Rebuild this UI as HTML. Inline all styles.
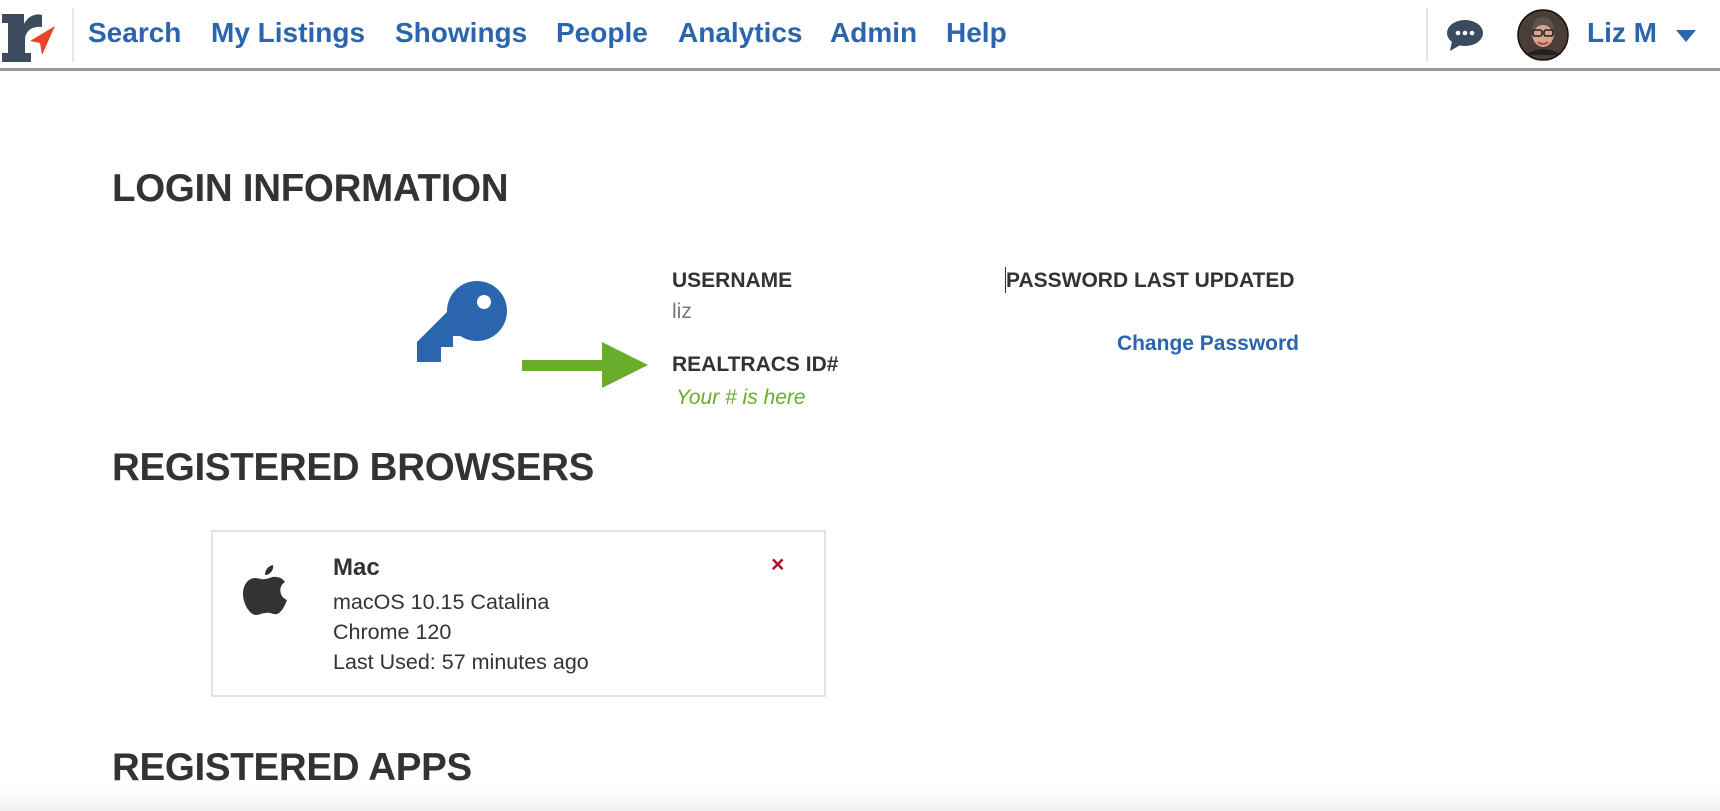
<!DOCTYPE html>
<html><head><meta charset="utf-8"><style>
*{margin:0;padding:0;box-sizing:border-box}
body{width:1720px;height:811px;overflow:hidden;background:#fff;font-family:"Liberation Sans",Arial,sans-serif;color:#333;position:relative}
.a{position:absolute;white-space:nowrap}
.nav{font-weight:bold;font-size:28px;color:#2a65ad;top:17px}
h1{position:absolute;font-size:38.5px;font-weight:bold;color:#333;left:112px;letter-spacing:-0.3px}
.lbl{font-weight:bold;font-size:21px;color:#333}
.grad{position:absolute;left:0;right:0;bottom:0;height:24px;background:linear-gradient(#fff,#f1f1f1)}
</style></head><body>
<svg class="a" style="left:0;top:6px" width="60" height="58" viewBox="0 0 60 58">
<path d="M2 8h22v10c4-8 12-11 18-9v12c-8-1-16 2-17 12v14h6v9H2v-9h6V17H2z" fill="#3d4b5e"/>
<path d="M55 20L30 35l10 2 2 12z" fill="#e8442a"/>
</svg>
<div class="a" style="left:72px;top:8px;width:2px;height:54px;background:#e6e6e6"></div>
<div class="a nav" style="left:88px">Search</div>
<div class="a nav" style="left:211px">My Listings</div>
<div class="a nav" style="left:395px">Showings</div>
<div class="a nav" style="left:556px">People</div>
<div class="a nav" style="left:678px">Analytics</div>
<div class="a nav" style="left:830px">Admin</div>
<div class="a nav" style="left:946px">Help</div>
<div class="a" style="left:1426px;top:8px;width:2px;height:54px;background:#e6e6e6"></div>
<svg class="a" style="left:1446px;top:19px" width="38" height="32" viewBox="0 0 38 32">
<ellipse cx="19" cy="14" rx="18" ry="13" fill="#3a4a5f"/><path d="M6 22L4 32 16 25z" fill="#3a4a5f"/>
<circle cx="12" cy="14" r="2.3" fill="#fff"/><circle cx="19" cy="14" r="2.3" fill="#fff"/><circle cx="26" cy="14" r="2.3" fill="#fff"/>
</svg>
<svg class="a" style="left:1517px;top:9px" width="52" height="52" viewBox="0 0 52 52">
<circle cx="26" cy="26" r="25" fill="#4a3e36" stroke="#111" stroke-width="1.5"/>
<ellipse cx="26" cy="24" rx="11" ry="14" fill="#d8a58c"/>
<path d="M14 30q0-22 12-22t12 22q-3-14-12-14t-12 14z" fill="#5c544c"/>
<rect x="16" y="21" width="9" height="6" rx="2" fill="none" stroke="#222" stroke-width="1.6"/><rect x="27" y="21" width="9" height="6" rx="2" fill="none" stroke="#222" stroke-width="1.6"/>
<path d="M21 33q5 4 10 0" stroke="#b0405a" stroke-width="2" fill="none"/>
<path d="M8 46q18-12 36 0" fill="#222"/>
</svg>
<div class="a nav" style="left:1587px">Liz M</div>
<svg class="a" style="left:1676px;top:30px" width="20" height="12"><path d="M0 0h20L10 12z" fill="#2a65ad"/></svg>
<div class="a" style="left:0;top:68px;width:1720px;height:3px;background:#999"></div>

<h1 style="top:167px">LOGIN INFORMATION</h1>
<svg class="a" style="left:417px;top:280px" width="92" height="92" viewBox="0 0 92 92">
<circle cx="60" cy="31" r="30" fill="#2a65ad"/>
<path d="M0 62L36 26 66 56 36 56 36 67 24 67 24 82 0 82z" fill="#2a65ad"/>
<circle cx="67" cy="22" r="7" fill="#fff"/>
</svg>
<svg class="a" style="left:522px;top:342px" width="128" height="46"><rect x="0" y="18" width="82" height="11" fill="#69ad2a"/><path d="M80 0L126 23 80 46z" fill="#69ad2a"/></svg>
<div class="a lbl" style="left:672px;top:269px">USERNAME</div>
<div class="a" style="left:672px;top:300px;font-size:21px;color:#777">liz</div>
<div class="a lbl" style="left:672px;top:353px">REALTRACS ID#</div>
<div class="a" style="left:676px;top:386px;font-size:21px;color:#69ad2a;font-style:italic">Your # is here</div>
<div class="a" style="left:1005px;top:267px;width:1px;height:26px;background:#333"></div>
<div class="a lbl" style="left:1006px;top:269px">PASSWORD LAST UPDATED</div>
<div class="a lbl" style="right:421px;top:332px;color:#2a65ad">Change Password</div>

<h1 style="top:446px">REGISTERED BROWSERS</h1>
<div class="a" style="left:211px;top:530px;width:615px;height:167px;border:2px solid #e3e3e3"></div>
<svg class="a" style="left:243px;top:565px" width="44" height="52" viewBox="0 0 44 52">
<path d="M30 0c1 5-3 10-8 10 0-5 3-9 8-10z" fill="#333"/>
<path d="M22 14c4 0 7-3 11-2 4 0 7 2 9 5-7 4-6 15 2 18-2 6-6 13-10 14-4 1-6-2-11-1-5 0-6 2-10 2C7 50 0 39 0 29 0 19 6 13 12 13c4 0 7 2 10 1z" fill="#333"/>
</svg>
<div class="a" style="left:333px;top:554px;font-size:24px;font-weight:bold">Mac</div>
<div class="a" style="left:333px;top:590px;font-size:21.5px">macOS 10.15 Catalina</div>
<div class="a" style="left:333px;top:620px;font-size:21.5px">Chrome 120</div>
<div class="a" style="left:333px;top:650px;font-size:21.5px">Last Used: 57 minutes ago</div>
<div class="a" style="left:771px;top:551px;font-size:23px;font-weight:bold;color:#b01020">×</div>

<h1 style="top:746px">REGISTERED APPS</h1>
<div class="grad"></div>
</body></html>
